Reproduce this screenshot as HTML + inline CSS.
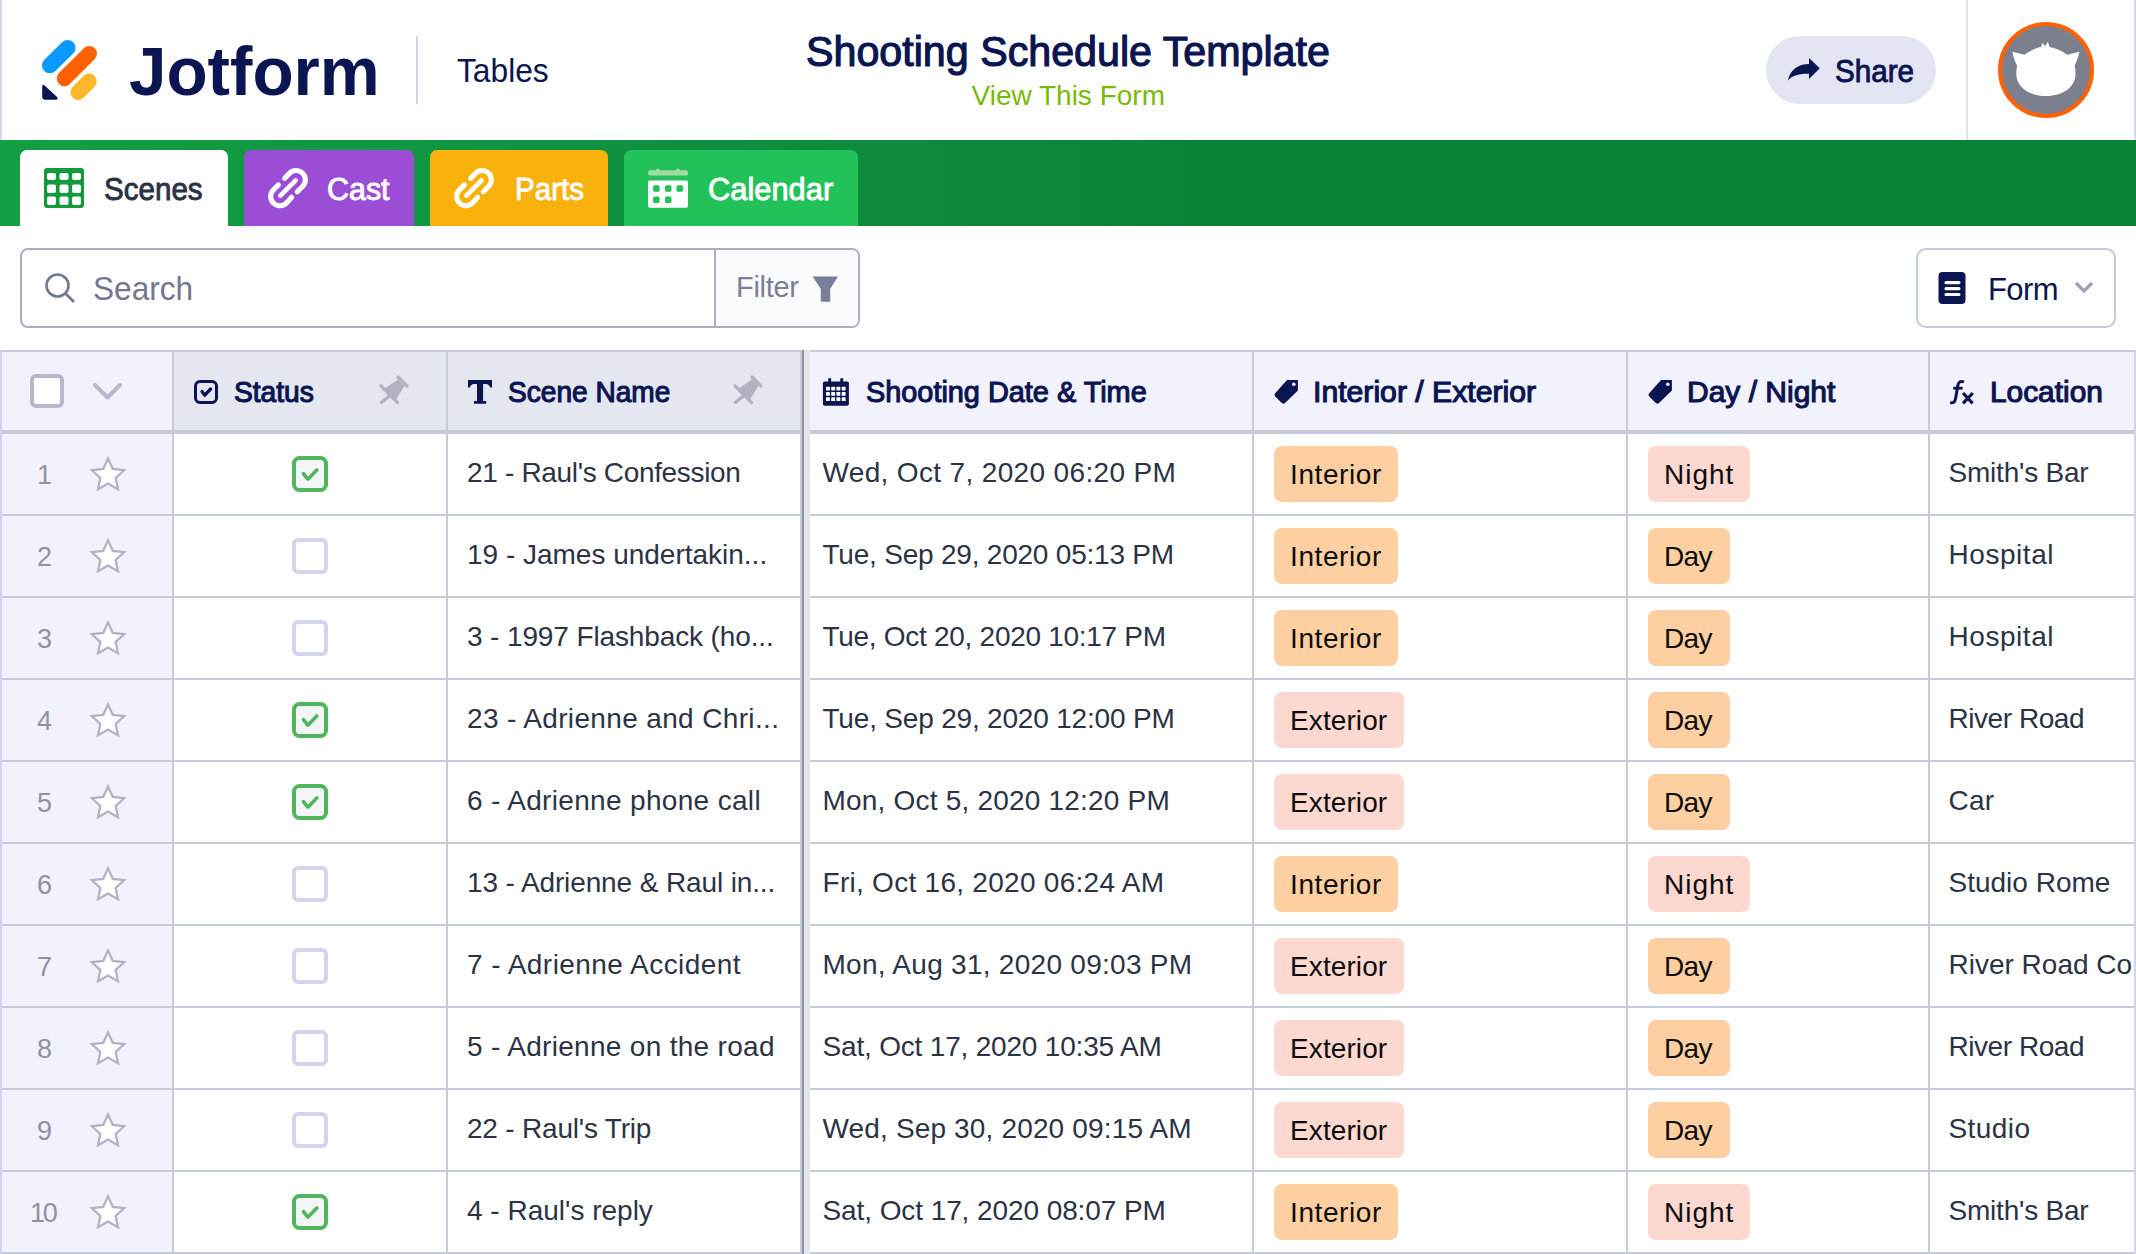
<!DOCTYPE html>
<html><head><meta charset="utf-8"><title>Shooting Schedule Template</title>
<style>
html,body{margin:0;padding:0;background:#fff}
body{width:2136px;height:1254px;position:relative;overflow:hidden;font-family:"Liberation Sans",sans-serif}
.t{position:absolute;white-space:nowrap}
</style></head><body>
<div style="position:absolute;left:0;top:0;width:2px;height:140px;background:#d6d7ee"></div><div style="position:absolute;left:2134px;top:0;width:2px;height:140px;background:#d6d7ee"></div><svg style="position:absolute;left:0;top:0" width="120" height="120" viewBox="0 0 120 120">
<line x1="49.8" y1="65.4" x2="67.6" y2="47.9" stroke="#0a99ff" stroke-width="15.8" stroke-linecap="round"/>
<line x1="64.4" y1="78.5" x2="89.3" y2="53.6" stroke="#ff6100" stroke-width="15.4" stroke-linecap="round"/>
<line x1="78.2" y1="92.2" x2="89.0" y2="81.3" stroke="#ffb629" stroke-width="15.4" stroke-linecap="round"/>
<path d="M42.2 86.5 Q42.2 83.6 44.6 85.6 L56.8 96.8 Q59 99.8 55.6 99.8 L45.2 99.8 Q42.2 99.8 42.2 96.8 Z" fill="#0a1551"/>
</svg><div class="t" style="left:129px;top:37.19px;font-size:69px;line-height:69px;color:#0a1551;font-weight:700;letter-spacing:0px;transform:scaleX(0.9762);transform-origin:0 0;">Jotform</div>
<div style="position:absolute;left:416px;top:36px;width:2px;height:68px;background:#d0d3ea"></div><div class="t" style="left:457.3px;top:54.07px;font-size:33px;line-height:33px;color:#0a1551;font-weight:400;letter-spacing:0px;transform:scaleX(0.9613);transform-origin:0 0;">Tables</div>
<div class="t" style="left:806px;top:30.65px;font-size:42px;line-height:42px;color:#0a1551;font-weight:400;letter-spacing:0px;transform:scaleX(0.9812);transform-origin:0 0;-webkit-text-stroke:1.2px #0a1551;">Shooting Schedule Template</div>
<div class="t" style="left:971.5px;top:81.80px;font-size:28px;line-height:28px;color:#78bb07;font-weight:400;letter-spacing:0px;">View This Form</div>
<div style="position:absolute;left:1766px;top:36px;width:170px;height:68px;border-radius:34px;background:#e3e5f2"></div><svg style="position:absolute;left:1786px;top:56px" width="36" height="28" viewBox="0 0 36 28">
<path d="M1.9 24.6 C4 14 12 8 23 8 L23 1.9 L33.8 12.2 L23 23 L23 17.8 C13 17.5 6 19.5 1.9 24.6 Z" fill="#0a1551"/></svg><div class="t" style="left:1835px;top:56.06px;font-size:31px;line-height:31px;color:#0a1551;font-weight:400;letter-spacing:0px;transform:scaleX(0.9556);transform-origin:0 0;-webkit-text-stroke:0.9px #0a1551;">Share</div>
<div style="position:absolute;left:1966px;top:0;width:2px;height:140px;background:#e0e1ea"></div><svg style="position:absolute;left:1994px;top:18px" width="104" height="104" viewBox="0 0 104 104">
<circle cx="52" cy="52" r="46" fill="#7b7f8e" stroke="#ff6100" stroke-width="4"/>
<path d="M18.4 33.7 L30.2 36.8 C37 32 43 29.5 47 29 L48.6 24.6 L51 28.3 L53.9 23.8 L55.6 29 C61 29.8 67 32 73.2 36.8 L85.5 33.7 C84 40 82 45 80.6 47.8 C81.3 50 81.5 53 81.5 56 C81.5 69 69 78 52 78 C35 78 22.3 69 22.3 56 C22.3 53 22.7 50 23.2 47.8 C21.5 45 19.5 40 18.4 33.7 Z" fill="#fff"/>
</svg><div style="position:absolute;left:0;top:140px;width:2136px;height:86px;background:linear-gradient(to right,#149e44 0%,#0f9140 30%,#0a8233 58%,#0a8233 100%)"></div><div style="position:absolute;left:20px;top:150px;width:208px;height:76px;background:#ffffff;border-radius:7px 7px 0 0"></div><div style="position:absolute;left:244px;top:150px;width:170px;height:76px;background:#9b4dd5;border-radius:7px 7px 0 0"></div><div style="position:absolute;left:430px;top:150px;width:178px;height:76px;background:#f9b10b;border-radius:7px 7px 0 0"></div><div style="position:absolute;left:624px;top:150px;width:234px;height:76px;background:#22c15a;border-radius:7px 7px 0 0"></div><svg style="position:absolute;left:44px;top:168px" width="40" height="40" viewBox="0 0 40 40">
<rect x="0" y="0" width="40" height="40" rx="3" fill="#14993f"/>
<g fill="#fff">
<rect x="3" y="5" width="9" height="7" rx="2"/><rect x="15.5" y="5" width="9" height="7" rx="2"/><rect x="28" y="5" width="9" height="7" rx="2"/>
<rect x="3" y="16.5" width="9" height="8.5" rx="2"/><rect x="15.5" y="16.5" width="9" height="8.5" rx="2"/><rect x="28" y="16.5" width="9" height="8.5" rx="2"/>
<rect x="3" y="28.5" width="9" height="8.5" rx="2"/><rect x="15.5" y="28.5" width="9" height="8.5" rx="2"/><rect x="28" y="28.5" width="9" height="8.5" rx="2"/>
</g></svg><div class="t" style="left:104px;top:173.21px;font-size:32px;line-height:32px;color:#2b3245;font-weight:400;letter-spacing:0px;transform:scaleX(0.9238);transform-origin:0 0;-webkit-text-stroke:0.9px #2b3245;">Scenes</div>
<svg style="position:absolute;left:260px;top:160px" width="56" height="56" viewBox="0 0 56 56">
<g fill="none" stroke="#fff" stroke-linecap="round">
<path d="M24.7 18.3 L29.66 13.16 A9.25 9.25 0 0 1 42.74 26.24 L37.3 31.7" stroke-width="5.1"/>
<path d="M31.7 37.3 L26.34 43.14 A9.25 9.25 0 0 1 13.26 30.06 L18.4 24.9" stroke-width="5.1"/>
<path d="M20.4 35.6 L35.6 20.4" stroke-width="4.6"/>
</g></svg><div class="t" style="left:327px;top:173.21px;font-size:32px;line-height:32px;color:#ffffff;font-weight:400;letter-spacing:0px;transform:scaleX(0.9508);transform-origin:0 0;-webkit-text-stroke:0.9px #ffffff;">Cast</div>
<svg style="position:absolute;left:446px;top:160px" width="56" height="56" viewBox="0 0 56 56">
<g fill="none" stroke="#fff" stroke-linecap="round">
<path d="M24.7 18.3 L29.66 13.16 A9.25 9.25 0 0 1 42.74 26.24 L37.3 31.7" stroke-width="5.1"/>
<path d="M31.7 37.3 L26.34 43.14 A9.25 9.25 0 0 1 13.26 30.06 L18.4 24.9" stroke-width="5.1"/>
<path d="M20.4 35.6 L35.6 20.4" stroke-width="4.6"/>
</g></svg><div class="t" style="left:514.7px;top:173.21px;font-size:32px;line-height:32px;color:#ffffff;font-weight:400;letter-spacing:0px;transform:scaleX(0.9236);transform-origin:0 0;-webkit-text-stroke:0.9px #ffffff;">Parts</div>
<svg style="position:absolute;left:648px;top:167px" width="40" height="42" viewBox="0 0 40 42">
<rect x="0" y="3.2" width="40" height="5.3" rx="2.6" fill="#a0dba0"/>
<circle cx="9.8" cy="3.4" r="2" fill="#a0dba0"/><circle cx="29.9" cy="3.4" r="2" fill="#a0dba0"/>
<rect x="0" y="13.6" width="40" height="27.2" rx="2" fill="#fff"/>
<g fill="#22c15a"><rect x="5.1" y="18.2" width="6.5" height="6.5" rx="1.5"/><rect x="17" y="18.2" width="6.5" height="6.5" rx="1.5"/><rect x="28.5" y="18.2" width="6.5" height="6.5" rx="1.5"/>
<rect x="5.1" y="29.4" width="6.5" height="6.5" rx="1.5"/><rect x="17" y="29.4" width="6.5" height="6.5" rx="1.5"/></g>
</svg><div class="t" style="left:708px;top:173.21px;font-size:32px;line-height:32px;color:#ffffff;font-weight:400;letter-spacing:0px;transform:scaleX(0.9643);transform-origin:0 0;-webkit-text-stroke:0.9px #ffffff;">Calendar</div>
<div style="position:absolute;left:20px;top:248px;width:836px;height:76px;border:2px solid #aaaec4;border-radius:8px;background:#fff;overflow:hidden"><div style="position:absolute;left:692px;top:0;width:2px;height:76px;background:#aaaec4"></div><div style="position:absolute;left:694px;top:0;width:150px;height:76px;background:#fafbfd"></div></div><svg style="position:absolute;left:42px;top:270px" width="36" height="36" viewBox="0 0 36 36">
<circle cx="15.5" cy="15.5" r="11" fill="none" stroke="#737892" stroke-width="2.6"/>
<line x1="23.5" y1="23.5" x2="32" y2="32" stroke="#737892" stroke-width="2.6"/></svg><div class="t" style="left:93.1px;top:271.77px;font-size:33px;line-height:33px;color:#737790;font-weight:400;letter-spacing:0px;transform:scaleX(0.9584);transform-origin:0 0;">Search</div>
<div class="t" style="left:736px;top:273.25px;font-size:29px;line-height:29px;color:#7a7f99;font-weight:400;letter-spacing:-0.3px;">Filter</div>
<svg style="position:absolute;left:812px;top:276px" width="27" height="27" viewBox="0 0 27 27">
<path d="M0.5 0.5 L26 0.5 L18.2 13 L18.2 25.8 L8.8 25.8 L8.8 13 Z" fill="#7a7f99"/></svg><div style="position:absolute;left:1916px;top:248px;width:196px;height:76px;border:2px solid #c4c9dc;border-radius:10px;background:#fff"></div><svg style="position:absolute;left:1938px;top:272px" width="28" height="32" viewBox="0 0 28 32">
<rect x="0.5" y="0" width="27" height="32" rx="4" fill="#0a1551"/>
<g fill="#fff"><rect x="6.5" y="9" width="16" height="3.2" rx="1.6"/><rect x="6.5" y="15.1" width="16" height="3.2" rx="1.6"/><rect x="6.5" y="20.9" width="16" height="3.2" rx="1.6"/></g></svg><div class="t" style="left:1988px;top:273.96px;font-size:31px;line-height:31px;color:#0a1551;font-weight:400;letter-spacing:-0.6px;">Form</div>
<svg style="position:absolute;left:2072px;top:279px" width="24" height="18" viewBox="0 0 24 18">
<path d="M4 4 L12 12 L20 4" fill="none" stroke="#9da3b4" stroke-width="3.2"/></svg>
<div style="position:absolute;left:0;top:350px;width:2136px;height:904px;background:#fff"></div><div style="position:absolute;left:0;top:352px;width:2136px;height:78px;background:#f1f2fb"></div><div style="position:absolute;left:174px;top:352px;width:628px;height:78px;background:#e4e6f0"></div><div style="position:absolute;left:0;top:434px;width:172px;height:820px;background:#f1f2fb"></div><div style="position:absolute;left:0;top:350px;width:2136px;height:2px;background:#c6cbda"></div><div style="position:absolute;left:0;top:430px;width:2136px;height:4px;background:#c5cad8"></div><div style="position:absolute;left:0;top:514px;width:2136px;height:2px;background:#c6cbda"></div><div style="position:absolute;left:0;top:596px;width:2136px;height:2px;background:#c6cbda"></div><div style="position:absolute;left:0;top:678px;width:2136px;height:2px;background:#c6cbda"></div><div style="position:absolute;left:0;top:760px;width:2136px;height:2px;background:#c6cbda"></div><div style="position:absolute;left:0;top:842px;width:2136px;height:2px;background:#c6cbda"></div><div style="position:absolute;left:0;top:924px;width:2136px;height:2px;background:#c6cbda"></div><div style="position:absolute;left:0;top:1006px;width:2136px;height:2px;background:#c6cbda"></div><div style="position:absolute;left:0;top:1088px;width:2136px;height:2px;background:#c6cbda"></div><div style="position:absolute;left:0;top:1170px;width:2136px;height:2px;background:#c6cbda"></div><div style="position:absolute;left:0;top:1252px;width:2136px;height:2px;background:#c6cbda"></div><div style="position:absolute;left:172px;top:350px;width:2px;height:904px;background:#c6cbda"></div><div style="position:absolute;left:446px;top:350px;width:2px;height:904px;background:#c6cbda"></div><div style="position:absolute;left:800px;top:350px;width:2px;height:904px;background:#c6cbda"></div><div style="position:absolute;left:1252px;top:350px;width:2px;height:904px;background:#c6cbda"></div><div style="position:absolute;left:1626px;top:350px;width:2px;height:904px;background:#c6cbda"></div><div style="position:absolute;left:1928px;top:350px;width:2px;height:904px;background:#c6cbda"></div><div style="position:absolute;left:0;top:350px;width:2px;height:904px;background:#d3d4ec"></div><div style="position:absolute;left:2134px;top:350px;width:2px;height:904px;background:#d3d4ec"></div><div style="position:absolute;left:802px;top:350px;width:2px;height:904px;background:#8f93a3"></div><div style="position:absolute;left:804px;top:350px;width:6px;height:904px;background:#e4e5e8"></div><div style="position:absolute;left:30px;top:374px;width:26px;height:26px;border:4px solid #b6b8cb;border-radius:6px;background:#fff"></div><svg style="position:absolute;left:92px;top:382px" width="32" height="20" viewBox="0 0 32 20">
<path d="M3 3 L15.5 15.5 L28 3" fill="none" stroke="#b6b8cb" stroke-width="4" stroke-linecap="round" stroke-linejoin="round"/></svg><svg style="position:absolute;left:186px;top:372px" width="40" height="40" viewBox="0 0 40 40">
<rect x="9.5" y="9.5" width="21" height="21" rx="4.5" fill="none" stroke="#0a1551" stroke-width="3"/>
<path d="M16 19.6 L18.8 23.2 L24.6 17" fill="none" stroke="#0a1551" stroke-width="3.3" stroke-linecap="round" stroke-linejoin="round"/></svg><div class="t" style="left:234.2px;top:377.65px;font-size:29px;line-height:29px;color:#0a1551;font-weight:400;letter-spacing:0px;transform:scaleX(0.9716);transform-origin:0 0;-webkit-text-stroke:1.1px #0a1551;">Status</div>
<svg style="position:absolute;left:372px;top:370px" width="40" height="40" viewBox="0 0 40 40">
<g stroke="#b1b3c3" stroke-linecap="round" fill="#b1b3c3">
<line x1="26" y1="7" x2="35" y2="16" stroke-width="3.2"/>
<line x1="9" y1="15.8" x2="25.6" y2="32.6" stroke-width="3.2"/>
<polygon points="12.5,18.5 26,9.5 32.5,16 24,29.5" stroke-width="0"/>
<line x1="17.5" y1="26" x2="9.5" y2="32.3" stroke-width="3.4"/></g></svg><svg style="position:absolute;left:460px;top:372px" width="40" height="40" viewBox="0 0 40 40">
<path d="M8 8 H32 V15.6 H30.2 Q29 12 26.2 11.9 H23.1 V29.1 H26.2 V31.8 H14 V29.1 H17 V11.9 H13.8 Q11 12 9.8 15.6 H8 Z" fill="#0a1551"/></svg><div class="t" style="left:508px;top:377.65px;font-size:29px;line-height:29px;color:#0a1551;font-weight:400;letter-spacing:0px;transform:scaleX(0.9681);transform-origin:0 0;-webkit-text-stroke:1.1px #0a1551;">Scene Name</div>
<svg style="position:absolute;left:726px;top:370px" width="40" height="40" viewBox="0 0 40 40">
<g stroke="#b1b3c3" stroke-linecap="round" fill="#b1b3c3">
<line x1="26" y1="7" x2="35" y2="16" stroke-width="3.2"/>
<line x1="9" y1="15.8" x2="25.6" y2="32.6" stroke-width="3.2"/>
<polygon points="12.5,18.5 26,9.5 32.5,16 24,29.5" stroke-width="0"/>
<line x1="17.5" y1="26" x2="9.5" y2="32.3" stroke-width="3.4"/></g></svg><svg style="position:absolute;left:816px;top:372px" width="40" height="40" viewBox="0 0 40 40">
<rect x="6.9" y="9.4" width="26" height="24.4" rx="1.8" fill="#0a1551"/>
<rect x="12.2" y="5.9" width="2.9" height="5" rx="1.4" fill="#0a1551"/><rect x="24.3" y="5.9" width="2.9" height="5" rx="1.4" fill="#0a1551"/>
<g fill="#fff"><rect x="10" y="14.7" width="3.9" height="3.8" rx="0.6"/><rect x="15.2" y="14.7" width="3.9" height="3.8" rx="0.6"/><rect x="20.4" y="14.7" width="3.9" height="3.8" rx="0.6"/><rect x="25.7" y="14.7" width="3.9" height="3.8" rx="0.6"/><rect x="10" y="19.95" width="3.9" height="3.8" rx="0.6"/><rect x="15.2" y="19.95" width="3.9" height="3.8" rx="0.6"/><rect x="20.4" y="19.95" width="3.9" height="3.8" rx="0.6"/><rect x="25.7" y="19.95" width="3.9" height="3.8" rx="0.6"/><rect x="10" y="25.2" width="3.9" height="3.8" rx="0.6"/><rect x="15.2" y="25.2" width="3.9" height="3.8" rx="0.6"/><rect x="20.4" y="25.2" width="3.9" height="3.8" rx="0.6"/><rect x="25.7" y="25.2" width="3.9" height="3.8" rx="0.6"/></g></svg><div class="t" style="left:865.7px;top:377.65px;font-size:29px;line-height:29px;color:#0a1551;font-weight:400;letter-spacing:0px;transform:scaleX(0.995);transform-origin:0 0;-webkit-text-stroke:1.1px #0a1551;">Shooting Date &amp; Time</div>
<svg style="position:absolute;left:1266px;top:372px" width="40" height="40" viewBox="0 0 40 40">
<path d="M21 8.1 L31.9 8.1 L31.9 18.5 L19 31 Q17.4 32.6 15.8 31 L9.2 24.4 Q7.6 22.8 9.2 21.2 Z" fill="#0a1551"/>
<circle cx="27.8" cy="12.3" r="1.8" fill="#f1f2fb"/></svg><div class="t" style="left:1313px;top:377.65px;font-size:29px;line-height:29px;color:#0a1551;font-weight:400;letter-spacing:0px;transform:scaleX(1.0408);transform-origin:0 0;-webkit-text-stroke:1.1px #0a1551;">Interior / Exterior</div>
<svg style="position:absolute;left:1640px;top:372px" width="40" height="40" viewBox="0 0 40 40">
<path d="M21 8.1 L31.9 8.1 L31.9 18.5 L19 31 Q17.4 32.6 15.8 31 L9.2 24.4 Q7.6 22.8 9.2 21.2 Z" fill="#0a1551"/>
<circle cx="27.8" cy="12.3" r="1.8" fill="#f1f2fb"/></svg><div class="t" style="left:1687px;top:377.65px;font-size:29px;line-height:29px;color:#0a1551;font-weight:400;letter-spacing:0px;transform:scaleX(1.0345);transform-origin:0 0;-webkit-text-stroke:1.1px #0a1551;">Day / Night</div>
<svg style="position:absolute;left:1942px;top:372px" width="40" height="40" viewBox="0 0 40 40">
<g fill="none" stroke="#0a1551" stroke-width="3">
<path d="M22 10 C19 8.6 16.6 9.6 15.8 13.5 L13.6 26.5 C12.9 30.3 11.2 31.2 8.2 30.5"/>
<path d="M11.2 16.2 H20.6" stroke-width="2.8"/>
<path d="M21 21 L30.6 31.4 M30.8 21 L21 31.4" stroke-width="3.2"/></g></svg><div class="t" style="left:1989.5px;top:377.65px;font-size:29px;line-height:29px;color:#0a1551;font-weight:400;letter-spacing:0px;transform:scaleX(1.0292);transform-origin:0 0;-webkit-text-stroke:1.1px #0a1551;">Location</div>
<div class="t" style="left:37px;top:461.64px;font-size:27px;line-height:27px;color:#8e92a6;font-weight:400;letter-spacing:-0.5px;">1</div>
<svg style="position:absolute;left:87px;top:454px" width="42" height="40" viewBox="0 0 42 40">
<path d="M21.00 4.40 L25.76 14.84 L37.17 16.15 L28.70 23.90 L30.99 35.15 L21.00 29.50 L11.01 35.15 L13.30 23.90 L4.83 16.15 L16.24 14.84 Z" fill="#fff" stroke="#b0b4c6" stroke-width="2.3" stroke-linejoin="miter"/></svg><svg style="position:absolute;left:291px;top:456px" width="38" height="38" viewBox="0 0 38 38">
<rect x="3" y="2" width="32" height="32" rx="5.5" fill="#f4f5f7" stroke="#50b55e" stroke-width="4"/>
<path d="M12.4 17.6 L16.8 23.2 L25.8 14" fill="none" stroke="#50b55e" stroke-width="3.6" stroke-linecap="round" stroke-linejoin="round"/></svg><div class="t" style="left:467px;top:458.80px;font-size:28px;line-height:28px;color:#2c3345;font-weight:400;letter-spacing:-0.329px;white-space:nowrap">21 - Raul's Confession</div>
<div class="t" style="left:822.5px;top:458.80px;font-size:28px;line-height:28px;color:#2c3345;font-weight:400;letter-spacing:0.347px;">Wed, Oct 7, 2020 06:20 PM</div>
<div style="position:absolute;left:1274px;top:446px;width:124px;height:56px;border-radius:8px;background:#fdcfa1"></div><div class="t" style="left:1290px;top:461.30px;font-size:28px;line-height:28px;color:#0d0d0d;font-weight:400;letter-spacing:0.6px;">Interior</div>
<div style="position:absolute;left:1648px;top:446px;width:102px;height:56px;border-radius:8px;background:#fdd8d0"></div><div class="t" style="left:1664px;top:461.30px;font-size:28px;line-height:28px;color:#0d0d0d;font-weight:400;letter-spacing:1.0px;">Night</div>
<div class="t" style="left:1948.5px;top:458.80px;width:184px;overflow:hidden;font-size:28px;line-height:28px;letter-spacing:-0.21px;color:#2c3345;white-space:nowrap">Smith's Bar</div><div class="t" style="left:37px;top:543.64px;font-size:27px;line-height:27px;color:#8e92a6;font-weight:400;letter-spacing:-0.5px;">2</div>
<svg style="position:absolute;left:87px;top:536px" width="42" height="40" viewBox="0 0 42 40">
<path d="M21.00 4.40 L25.76 14.84 L37.17 16.15 L28.70 23.90 L30.99 35.15 L21.00 29.50 L11.01 35.15 L13.30 23.90 L4.83 16.15 L16.24 14.84 Z" fill="#fff" stroke="#b0b4c6" stroke-width="2.3" stroke-linejoin="miter"/></svg><div style="position:absolute;left:292px;top:538px;width:28px;height:28px;border:4px solid #d3d6eb;border-radius:6px;background:#fff"></div><div class="t" style="left:467px;top:540.80px;font-size:28px;line-height:28px;color:#2c3345;font-weight:400;letter-spacing:-0.009px;white-space:nowrap">19 - James undertakin...</div>
<div class="t" style="left:822.5px;top:540.80px;font-size:28px;line-height:28px;color:#2c3345;font-weight:400;letter-spacing:-0.214px;">Tue, Sep 29, 2020 05:13 PM</div>
<div style="position:absolute;left:1274px;top:528px;width:124px;height:56px;border-radius:8px;background:#fdcfa1"></div><div class="t" style="left:1290px;top:543.30px;font-size:28px;line-height:28px;color:#0d0d0d;font-weight:400;letter-spacing:0.6px;">Interior</div>
<div style="position:absolute;left:1648px;top:528px;width:82px;height:56px;border-radius:8px;background:#fdcfa1"></div><div class="t" style="left:1664px;top:543.30px;font-size:28px;line-height:28px;color:#0d0d0d;font-weight:400;letter-spacing:-0.6px;">Day</div>
<div class="t" style="left:1948.5px;top:540.80px;width:184px;overflow:hidden;font-size:28px;line-height:28px;letter-spacing:0.557px;color:#2c3345;white-space:nowrap">Hospital</div><div class="t" style="left:37px;top:625.64px;font-size:27px;line-height:27px;color:#8e92a6;font-weight:400;letter-spacing:-0.5px;">3</div>
<svg style="position:absolute;left:87px;top:618px" width="42" height="40" viewBox="0 0 42 40">
<path d="M21.00 4.40 L25.76 14.84 L37.17 16.15 L28.70 23.90 L30.99 35.15 L21.00 29.50 L11.01 35.15 L13.30 23.90 L4.83 16.15 L16.24 14.84 Z" fill="#fff" stroke="#b0b4c6" stroke-width="2.3" stroke-linejoin="miter"/></svg><div style="position:absolute;left:292px;top:620px;width:28px;height:28px;border:4px solid #d3d6eb;border-radius:6px;background:#fff"></div><div class="t" style="left:467px;top:622.80px;font-size:28px;line-height:28px;color:#2c3345;font-weight:400;letter-spacing:-0.125px;white-space:nowrap">3 - 1997 Flashback (ho...</div>
<div class="t" style="left:822.5px;top:622.80px;font-size:28px;line-height:28px;color:#2c3345;font-weight:400;letter-spacing:-0.286px;">Tue, Oct 20, 2020 10:17 PM</div>
<div style="position:absolute;left:1274px;top:610px;width:124px;height:56px;border-radius:8px;background:#fdcfa1"></div><div class="t" style="left:1290px;top:625.30px;font-size:28px;line-height:28px;color:#0d0d0d;font-weight:400;letter-spacing:0.6px;">Interior</div>
<div style="position:absolute;left:1648px;top:610px;width:82px;height:56px;border-radius:8px;background:#fdcfa1"></div><div class="t" style="left:1664px;top:625.30px;font-size:28px;line-height:28px;color:#0d0d0d;font-weight:400;letter-spacing:-0.6px;">Day</div>
<div class="t" style="left:1948.5px;top:622.80px;width:184px;overflow:hidden;font-size:28px;line-height:28px;letter-spacing:0.557px;color:#2c3345;white-space:nowrap">Hospital</div><div class="t" style="left:37px;top:707.64px;font-size:27px;line-height:27px;color:#8e92a6;font-weight:400;letter-spacing:-0.5px;">4</div>
<svg style="position:absolute;left:87px;top:700px" width="42" height="40" viewBox="0 0 42 40">
<path d="M21.00 4.40 L25.76 14.84 L37.17 16.15 L28.70 23.90 L30.99 35.15 L21.00 29.50 L11.01 35.15 L13.30 23.90 L4.83 16.15 L16.24 14.84 Z" fill="#fff" stroke="#b0b4c6" stroke-width="2.3" stroke-linejoin="miter"/></svg><svg style="position:absolute;left:291px;top:702px" width="38" height="38" viewBox="0 0 38 38">
<rect x="3" y="2" width="32" height="32" rx="5.5" fill="#f4f5f7" stroke="#50b55e" stroke-width="4"/>
<path d="M12.4 17.6 L16.8 23.2 L25.8 14" fill="none" stroke="#50b55e" stroke-width="3.6" stroke-linecap="round" stroke-linejoin="round"/></svg><div class="t" style="left:467px;top:704.80px;font-size:28px;line-height:28px;color:#2c3345;font-weight:400;letter-spacing:0.35px;white-space:nowrap">23 - Adrienne and Chri...</div>
<div class="t" style="left:822.5px;top:704.80px;font-size:28px;line-height:28px;color:#2c3345;font-weight:400;letter-spacing:-0.19px;">Tue, Sep 29, 2020 12:00 PM</div>
<div style="position:absolute;left:1274px;top:692px;width:130px;height:56px;border-radius:8px;background:#fdd8d0"></div><div class="t" style="left:1290px;top:707.30px;font-size:28px;line-height:28px;color:#0d0d0d;font-weight:400;letter-spacing:0.1px;">Exterior</div>
<div style="position:absolute;left:1648px;top:692px;width:82px;height:56px;border-radius:8px;background:#fdcfa1"></div><div class="t" style="left:1664px;top:707.30px;font-size:28px;line-height:28px;color:#0d0d0d;font-weight:400;letter-spacing:-0.6px;">Day</div>
<div class="t" style="left:1948.5px;top:704.80px;width:184px;overflow:hidden;font-size:28px;line-height:28px;letter-spacing:-0.444px;color:#2c3345;white-space:nowrap">River Road</div><div class="t" style="left:37px;top:789.64px;font-size:27px;line-height:27px;color:#8e92a6;font-weight:400;letter-spacing:-0.5px;">5</div>
<svg style="position:absolute;left:87px;top:782px" width="42" height="40" viewBox="0 0 42 40">
<path d="M21.00 4.40 L25.76 14.84 L37.17 16.15 L28.70 23.90 L30.99 35.15 L21.00 29.50 L11.01 35.15 L13.30 23.90 L4.83 16.15 L16.24 14.84 Z" fill="#fff" stroke="#b0b4c6" stroke-width="2.3" stroke-linejoin="miter"/></svg><svg style="position:absolute;left:291px;top:784px" width="38" height="38" viewBox="0 0 38 38">
<rect x="3" y="2" width="32" height="32" rx="5.5" fill="#f4f5f7" stroke="#50b55e" stroke-width="4"/>
<path d="M12.4 17.6 L16.8 23.2 L25.8 14" fill="none" stroke="#50b55e" stroke-width="3.6" stroke-linecap="round" stroke-linejoin="round"/></svg><div class="t" style="left:467px;top:786.80px;font-size:28px;line-height:28px;color:#2c3345;font-weight:400;letter-spacing:0.327px;white-space:nowrap">6 - Adrienne phone call</div>
<div class="t" style="left:822.5px;top:786.80px;font-size:28px;line-height:28px;color:#2c3345;font-weight:400;letter-spacing:0.201px;">Mon, Oct 5, 2020 12:20 PM</div>
<div style="position:absolute;left:1274px;top:774px;width:130px;height:56px;border-radius:8px;background:#fdd8d0"></div><div class="t" style="left:1290px;top:789.30px;font-size:28px;line-height:28px;color:#0d0d0d;font-weight:400;letter-spacing:0.1px;">Exterior</div>
<div style="position:absolute;left:1648px;top:774px;width:82px;height:56px;border-radius:8px;background:#fdcfa1"></div><div class="t" style="left:1664px;top:789.30px;font-size:28px;line-height:28px;color:#0d0d0d;font-weight:400;letter-spacing:-0.6px;">Day</div>
<div class="t" style="left:1948.5px;top:786.80px;width:184px;overflow:hidden;font-size:28px;line-height:28px;letter-spacing:0.2px;color:#2c3345;white-space:nowrap">Car</div><div class="t" style="left:37px;top:871.64px;font-size:27px;line-height:27px;color:#8e92a6;font-weight:400;letter-spacing:-0.5px;">6</div>
<svg style="position:absolute;left:87px;top:864px" width="42" height="40" viewBox="0 0 42 40">
<path d="M21.00 4.40 L25.76 14.84 L37.17 16.15 L28.70 23.90 L30.99 35.15 L21.00 29.50 L11.01 35.15 L13.30 23.90 L4.83 16.15 L16.24 14.84 Z" fill="#fff" stroke="#b0b4c6" stroke-width="2.3" stroke-linejoin="miter"/></svg><div style="position:absolute;left:292px;top:866px;width:28px;height:28px;border:4px solid #d3d6eb;border-radius:6px;background:#fff"></div><div class="t" style="left:467px;top:868.80px;font-size:28px;line-height:28px;color:#2c3345;font-weight:400;letter-spacing:-0.12px;white-space:nowrap">13 - Adrienne &amp; Raul in...</div>
<div class="t" style="left:822.5px;top:868.80px;font-size:28px;line-height:28px;color:#2c3345;font-weight:400;letter-spacing:0.278px;">Fri, Oct 16, 2020 06:24 AM</div>
<div style="position:absolute;left:1274px;top:856px;width:124px;height:56px;border-radius:8px;background:#fdcfa1"></div><div class="t" style="left:1290px;top:871.30px;font-size:28px;line-height:28px;color:#0d0d0d;font-weight:400;letter-spacing:0.6px;">Interior</div>
<div style="position:absolute;left:1648px;top:856px;width:102px;height:56px;border-radius:8px;background:#fdd8d0"></div><div class="t" style="left:1664px;top:871.30px;font-size:28px;line-height:28px;color:#0d0d0d;font-weight:400;letter-spacing:1.0px;">Night</div>
<div class="t" style="left:1948.5px;top:868.80px;width:184px;overflow:hidden;font-size:28px;line-height:28px;letter-spacing:0.0px;color:#2c3345;white-space:nowrap">Studio Rome</div><div class="t" style="left:37px;top:953.64px;font-size:27px;line-height:27px;color:#8e92a6;font-weight:400;letter-spacing:-0.5px;">7</div>
<svg style="position:absolute;left:87px;top:946px" width="42" height="40" viewBox="0 0 42 40">
<path d="M21.00 4.40 L25.76 14.84 L37.17 16.15 L28.70 23.90 L30.99 35.15 L21.00 29.50 L11.01 35.15 L13.30 23.90 L4.83 16.15 L16.24 14.84 Z" fill="#fff" stroke="#b0b4c6" stroke-width="2.3" stroke-linejoin="miter"/></svg><div style="position:absolute;left:292px;top:948px;width:28px;height:28px;border:4px solid #d3d6eb;border-radius:6px;background:#fff"></div><div class="t" style="left:467px;top:950.80px;font-size:28px;line-height:28px;color:#2c3345;font-weight:400;letter-spacing:0.45px;white-space:nowrap">7 - Adrienne Accident</div>
<div class="t" style="left:822.5px;top:950.80px;font-size:28px;line-height:28px;color:#2c3345;font-weight:400;letter-spacing:0.274px;">Mon, Aug 31, 2020 09:03 PM</div>
<div style="position:absolute;left:1274px;top:938px;width:130px;height:56px;border-radius:8px;background:#fdd8d0"></div><div class="t" style="left:1290px;top:953.30px;font-size:28px;line-height:28px;color:#0d0d0d;font-weight:400;letter-spacing:0.1px;">Exterior</div>
<div style="position:absolute;left:1648px;top:938px;width:82px;height:56px;border-radius:8px;background:#fdcfa1"></div><div class="t" style="left:1664px;top:953.30px;font-size:28px;line-height:28px;color:#0d0d0d;font-weight:400;letter-spacing:-0.6px;">Day</div>
<div class="t" style="left:1948.5px;top:950.80px;width:184px;overflow:hidden;font-size:28px;line-height:28px;letter-spacing:0px;color:#2c3345;white-space:nowrap">River Road Corner</div><div class="t" style="left:37px;top:1035.64px;font-size:27px;line-height:27px;color:#8e92a6;font-weight:400;letter-spacing:-0.5px;">8</div>
<svg style="position:absolute;left:87px;top:1028px" width="42" height="40" viewBox="0 0 42 40">
<path d="M21.00 4.40 L25.76 14.84 L37.17 16.15 L28.70 23.90 L30.99 35.15 L21.00 29.50 L11.01 35.15 L13.30 23.90 L4.83 16.15 L16.24 14.84 Z" fill="#fff" stroke="#b0b4c6" stroke-width="2.3" stroke-linejoin="miter"/></svg><div style="position:absolute;left:292px;top:1030px;width:28px;height:28px;border:4px solid #d3d6eb;border-radius:6px;background:#fff"></div><div class="t" style="left:467px;top:1032.80px;font-size:28px;line-height:28px;color:#2c3345;font-weight:400;letter-spacing:0.309px;white-space:nowrap">5 - Adrienne on the road</div>
<div class="t" style="left:822.5px;top:1032.80px;font-size:28px;line-height:28px;color:#2c3345;font-weight:400;letter-spacing:-0.186px;">Sat, Oct 17, 2020 10:35 AM</div>
<div style="position:absolute;left:1274px;top:1020px;width:130px;height:56px;border-radius:8px;background:#fdd8d0"></div><div class="t" style="left:1290px;top:1035.30px;font-size:28px;line-height:28px;color:#0d0d0d;font-weight:400;letter-spacing:0.1px;">Exterior</div>
<div style="position:absolute;left:1648px;top:1020px;width:82px;height:56px;border-radius:8px;background:#fdcfa1"></div><div class="t" style="left:1664px;top:1035.30px;font-size:28px;line-height:28px;color:#0d0d0d;font-weight:400;letter-spacing:-0.6px;">Day</div>
<div class="t" style="left:1948.5px;top:1032.80px;width:184px;overflow:hidden;font-size:28px;line-height:28px;letter-spacing:-0.444px;color:#2c3345;white-space:nowrap">River Road</div><div class="t" style="left:37px;top:1117.64px;font-size:27px;line-height:27px;color:#8e92a6;font-weight:400;letter-spacing:-0.5px;">9</div>
<svg style="position:absolute;left:87px;top:1110px" width="42" height="40" viewBox="0 0 42 40">
<path d="M21.00 4.40 L25.76 14.84 L37.17 16.15 L28.70 23.90 L30.99 35.15 L21.00 29.50 L11.01 35.15 L13.30 23.90 L4.83 16.15 L16.24 14.84 Z" fill="#fff" stroke="#b0b4c6" stroke-width="2.3" stroke-linejoin="miter"/></svg><div style="position:absolute;left:292px;top:1112px;width:28px;height:28px;border:4px solid #d3d6eb;border-radius:6px;background:#fff"></div><div class="t" style="left:467px;top:1114.80px;font-size:28px;line-height:28px;color:#2c3345;font-weight:400;letter-spacing:-0.2px;white-space:nowrap">22 - Raul's Trip</div>
<div class="t" style="left:822.5px;top:1114.80px;font-size:28px;line-height:28px;color:#2c3345;font-weight:400;letter-spacing:0.154px;">Wed, Sep 30, 2020 09:15 AM</div>
<div style="position:absolute;left:1274px;top:1102px;width:130px;height:56px;border-radius:8px;background:#fdd8d0"></div><div class="t" style="left:1290px;top:1117.30px;font-size:28px;line-height:28px;color:#0d0d0d;font-weight:400;letter-spacing:0.1px;">Exterior</div>
<div style="position:absolute;left:1648px;top:1102px;width:82px;height:56px;border-radius:8px;background:#fdcfa1"></div><div class="t" style="left:1664px;top:1117.30px;font-size:28px;line-height:28px;color:#0d0d0d;font-weight:400;letter-spacing:-0.6px;">Day</div>
<div class="t" style="left:1948.5px;top:1114.80px;width:184px;overflow:hidden;font-size:28px;line-height:28px;letter-spacing:0.44px;color:#2c3345;white-space:nowrap">Studio</div><div class="t" style="left:30px;top:1199.64px;font-size:27px;line-height:27px;color:#8e92a6;font-weight:400;letter-spacing:-2.2px;">10</div>
<svg style="position:absolute;left:87px;top:1192px" width="42" height="40" viewBox="0 0 42 40">
<path d="M21.00 4.40 L25.76 14.84 L37.17 16.15 L28.70 23.90 L30.99 35.15 L21.00 29.50 L11.01 35.15 L13.30 23.90 L4.83 16.15 L16.24 14.84 Z" fill="#fff" stroke="#b0b4c6" stroke-width="2.3" stroke-linejoin="miter"/></svg><svg style="position:absolute;left:291px;top:1194px" width="38" height="38" viewBox="0 0 38 38">
<rect x="3" y="2" width="32" height="32" rx="5.5" fill="#f4f5f7" stroke="#50b55e" stroke-width="4"/>
<path d="M12.4 17.6 L16.8 23.2 L25.8 14" fill="none" stroke="#50b55e" stroke-width="3.6" stroke-linecap="round" stroke-linejoin="round"/></svg><div class="t" style="left:467px;top:1196.80px;font-size:28px;line-height:28px;color:#2c3345;font-weight:400;letter-spacing:0.0px;white-space:nowrap">4 - Raul's reply</div>
<div class="t" style="left:822.5px;top:1196.80px;font-size:28px;line-height:28px;color:#2c3345;font-weight:400;letter-spacing:-0.086px;">Sat, Oct 17, 2020 08:07 PM</div>
<div style="position:absolute;left:1274px;top:1184px;width:124px;height:56px;border-radius:8px;background:#fdcfa1"></div><div class="t" style="left:1290px;top:1199.30px;font-size:28px;line-height:28px;color:#0d0d0d;font-weight:400;letter-spacing:0.6px;">Interior</div>
<div style="position:absolute;left:1648px;top:1184px;width:102px;height:56px;border-radius:8px;background:#fdd8d0"></div><div class="t" style="left:1664px;top:1199.30px;font-size:28px;line-height:28px;color:#0d0d0d;font-weight:400;letter-spacing:1.0px;">Night</div>
<div class="t" style="left:1948.5px;top:1196.80px;width:184px;overflow:hidden;font-size:28px;line-height:28px;letter-spacing:-0.21px;color:#2c3345;white-space:nowrap">Smith's Bar</div>
</body></html>
